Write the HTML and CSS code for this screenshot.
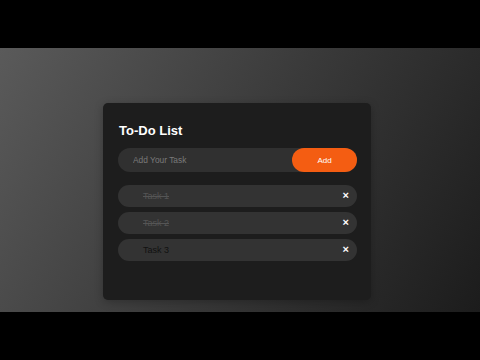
FILE: index.html
```html
<!DOCTYPE html>
<html lang="en">

<head>
  <meta charset="UTF-8">
  <meta name="viewport" content="width=device-width, initial-scale=1.0">
  <title>To-Do List</title>
  <link rel="stylesheet" href="styles.css">
</head>

<body>
  <div class="screen">
    <div class="todo-app">
      <h2 class="title">To-Do List</h2>
      <div class="row">
        <input type="text" class="task-input" placeholder="Add Your Task">
        <button class="add-btn">Add</button>
      </div>
      <ul class="list">
        <li class="item checked"><span class="text">Task 1</span><span class="close">&times;</span></li>
        <li class="item checked"><span class="text">Task 2</span><span class="close">&times;</span></li>
        <li class="item"><span class="text">Task 3</span><span class="close">&times;</span></li>
      </ul>
    </div>
  </div>
</body>

</html>
```

FILE: styles.css
```css
* {
  padding: 0;
  margin: 0;
  box-sizing: border-box;
}

ul {
  list-style: none;
}

body {
  background-color: #000;
  font-family: "Liberation Sans", Arial, sans-serif;
}

.screen {
  margin-top: 48px;
  height: 264px;
  padding: 55px 0 0 103px;
  background: linear-gradient(120deg, #5a5a5a 0%, #3a3a3a 50%, #1c1c1c 100%);
}

.todo-app {
  width: 268px;
  background-color: #1d1d1d;
  border-radius: 5px;
  padding: 20px 14px 39px 15px;
  box-shadow: 0 2px 8px rgba(0, 0, 0, .25);
}

.title {
  color: #fff;
  font-size: 13px;
  line-height: 16px;
  font-weight: bold;
  margin: 0 0 9px 1px;
}

.row {
  display: flex;
  height: 24px;
  background-color: #303030;
  border-radius: 12px;
}

.task-input {
  flex: 1;
  min-width: 0;
  border: none;
  outline: none;
  background: transparent;
  padding-left: 15px;
  font-family: inherit;
  font-size: 8.4px;
  color: #ddd;
}

.task-input::placeholder {
  color: #7a7a7a;
}

.add-btn {
  width: 65px;
  border: none;
  border-radius: 12px;
  background-color: #f45d12;
  color: #fff;
  font-family: inherit;
  font-size: 8px;
}

.list {
  margin-top: 13px;
  display: flex;
  flex-direction: column;
  gap: 5px;
}

.item {
  display: flex;
  align-items: center;
  justify-content: space-between;
  height: 22px;
  padding: 0 8px 1px 25px;
  background-color: #333;
  border-radius: 11px;
  font-size: 9px;
  color: #111;
}

.item.checked .text {
  color: #555;
  text-decoration: line-through;
}

.close {
  color: #fff;
  font-size: 11px;
  font-weight: bold;
  line-height: 1;
}
```
